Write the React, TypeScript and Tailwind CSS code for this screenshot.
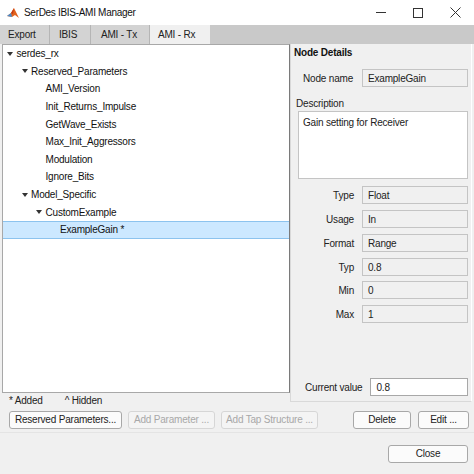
import React from 'react';

type Node = { label: string; level: number; open?: boolean; selected?: boolean };

const nodes: Node[] = [
  { label: 'serdes_rx', level: 0, open: true },
  { label: 'Reserved_Parameters', level: 1, open: true },
  { label: 'AMI_Version', level: 2 },
  { label: 'Init_Returns_Impulse', level: 2 },
  { label: 'GetWave_Exists', level: 2 },
  { label: 'Max_Init_Aggressors', level: 2 },
  { label: 'Modulation', level: 2 },
  { label: 'Ignore_Bits', level: 2 },
  { label: 'Model_Specific', level: 1, open: true },
  { label: 'CustomExample', level: 2, open: true },
  { label: 'ExampleGain *', level: 3, selected: true },
];

const indent = ['pl-[4px]', 'pl-[18.5px]', 'pl-[33px]', 'pl-[47.5px]'];

function Arrow() {
  return (
    <svg width="6" height="4" viewBox="0 0 6 4" className="block">
      <path d="M0 0 L6 0 L3 4 Z" fill="#333" />
    </svg>
  );
}

function Field({ label, value, mt }: { label: string; value: string; mt: string }) {
  return (
    <div className={`flex items-center h-[18px] ${mt}`}>
      <div className="w-[63px] text-right text-[#222]">{label}</div>
      <div className="ml-[8px] flex-1 h-full border border-[#c4c4c4] bg-[#f0f0f0] px-[5px] flex items-center text-[#222]">
        {value}
      </div>
    </div>
  );
}

function Btn({ children, disabled, className = '' }: { children: React.ReactNode; disabled?: boolean; className?: string }) {
  return (
    <button
      className={`h-[18px] rounded-[3px] border flex items-center justify-center whitespace-nowrap overflow-hidden leading-none ${
        disabled ? 'border-[#d6d6d6] text-[#a8a8a8] bg-[#f4f4f4]' : 'border-[#a8a8a8] text-[#222] bg-[#fbfbfb]'
      } ${className}`}
    >
      {children}
    </button>
  );
}

export default function App() {
  return (
    <div className="w-[474px] h-[474px] bg-[#f0f0f0] flex flex-col overflow-hidden font-['Liberation_Sans',Arial,sans-serif] text-[10px] tracking-[-0.2px] text-black">
      {/* Title bar */}
      <div className="h-[25px] bg-white flex items-center shrink-0">
        <svg width="12" height="12" viewBox="0 0 12 12" className="ml-[7px]">
          <path d="M0 9 L4 6 L7 1 L12 11 L8 8 L5 10 Z" fill="#e2621c" />
          <path d="M4 6 L7 1 L6 7 Z" fill="#c23a12" />
          <path d="M0 9 L4 6 L5 10 Z" fill="#4a8ccc" />
        </svg>
        <span className="ml-[5px] text-[10px] tracking-[-0.3px] text-[#111]">SerDes IBIS-AMI Manager</span>
        <div className="ml-auto flex items-center h-full">
          <div className="w-[36px] flex justify-center">
            <div className="w-[10px] h-px bg-[#333]" />
          </div>
          <div className="w-[36px] flex justify-center ml-[1px]">
            <div className="w-[10px] h-[10px] border border-[#333]" />
          </div>
          <div className="w-[36px] flex justify-center ml-[1px] mr-[1px]">
            <svg width="11" height="11" viewBox="0 0 11 11">
              <path d="M0.5 0.5 L10.5 10.5 M10.5 0.5 L0.5 10.5" stroke="#333" strokeWidth="1" />
            </svg>
          </div>
        </div>
      </div>

      {/* Tabs */}
      <div className="h-[19px] bg-[#c9c9c9] flex shrink-0">
        <div className="w-[50px] bg-[#d3d3d3] border-r border-[#b5b5b5] flex items-center pl-[8px] text-[#222]">Export</div>
        <div className="w-[41px] bg-[#d3d3d3] border-r border-[#b5b5b5] flex items-center pl-[9px] text-[#222]">IBIS</div>
        <div className="w-[59px] bg-[#d3d3d3] border-r border-[#b5b5b5] flex items-center pl-[10px] text-[#222]">AMI - Tx</div>
        <div className="w-[60px] bg-[#f0f0f0] flex items-center pl-[8px] text-[#222]">AMI - Rx</div>
      </div>

      {/* Main */}
      <div className="h-[363px] flex px-[2px] shrink-0">
        <div className="w-[288px] flex flex-col">
          <div className="flex-1 bg-white border border-[#a8a8a8] border-r-[#7a7a7a] overflow-hidden">
            {nodes.map((n) => (
              <div
                key={n.label}
                className={`h-[17.6px] flex items-center ${indent[n.level]} ${
                  n.selected ? 'bg-[#cce8ff] border border-[#8cc3ee] -mx-px' : ''
                }`}
              >
                <div className="w-[9.5px] flex">{n.open ? <Arrow /> : null}</div>
                <span className="text-[#111]">{n.label}</span>
              </div>
            ))}
          </div>
          <div className="h-[14px] flex items-center pl-[7px] text-[#222]">
            <span>* Added</span>
            <span className="ml-[22px]">^ Hidden</span>
          </div>
        </div>

        <div className="flex-1 h-[358px] flex flex-col border-l border-r border-b border-[#d9d9d9] border-r-white pr-[3px]">
          <div className="h-[16px] flex items-center pl-[3px] font-bold text-[#111]">Node Details</div>
          <div className="flex-1 flex flex-col">
            <div className="flex items-center h-[18px] mt-[9px]">
              <div className="w-[62px] text-right text-[#222]">Node name</div>
              <div className="ml-[9px] flex-1 h-full border border-[#c4c4c4] bg-[#f0f0f0] px-[5px] flex items-center text-[#222]">
                ExampleGain
              </div>
            </div>
            <div className="h-[14px] mt-[9px] pl-[5px] flex items-center text-[#222]">Description</div>
            <div className="h-[68px] mt-px ml-[7px] border border-[#c4c4c4] bg-white px-[4px] pt-[3px] text-[#222]">
              Gain setting for Receiver
            </div>
            <Field label="Type" value="Float" mt="mt-[7px]" />
            <Field label="Usage" value="In" mt="mt-[6px]" />
            <Field label="Format" value="Range" mt="mt-[6px]" />
            <Field label="Typ" value="0.8" mt="mt-[6px]" />
            <Field label="Min" value="0" mt="mt-[5px]" />
            <Field label="Max" value="1" mt="mt-[6px]" />
            <div className="flex-1" />
            <div className="flex items-center h-[18px] mb-[5px]">
              <div className="ml-[14px] text-[#222]">Current value</div>
              <div className="ml-[8px] flex-1 h-full border border-[#a8a8a8] bg-white px-[5px] flex items-center text-[#222]">
                0.8
              </div>
            </div>
          </div>
        </div>
      </div>

      {/* Buttons */}
      <div className="h-[18px] mt-[4px] flex shrink-0">
        <Btn className="ml-[9px] w-[113px]">Reserved Parameters...</Btn>
        <Btn disabled className="ml-[6px] w-[87px]">Add Parameter ...</Btn>
        <Btn disabled className="ml-[6px] w-[97px]">Add Tap Structure ...</Btn>
        <Btn className="ml-[35px] w-[58px]">Delete</Btn>
        <Btn className="ml-[7px] w-[51px]">Edit ...</Btn>
      </div>

      {/* Footer */}
      <div className="mt-[3px] border-t border-[#e4e4e4] flex-1 flex justify-end pt-[12px] pr-[6px]">
        <Btn className="w-[80px]">Close</Btn>
      </div>
    </div>
  );
}
